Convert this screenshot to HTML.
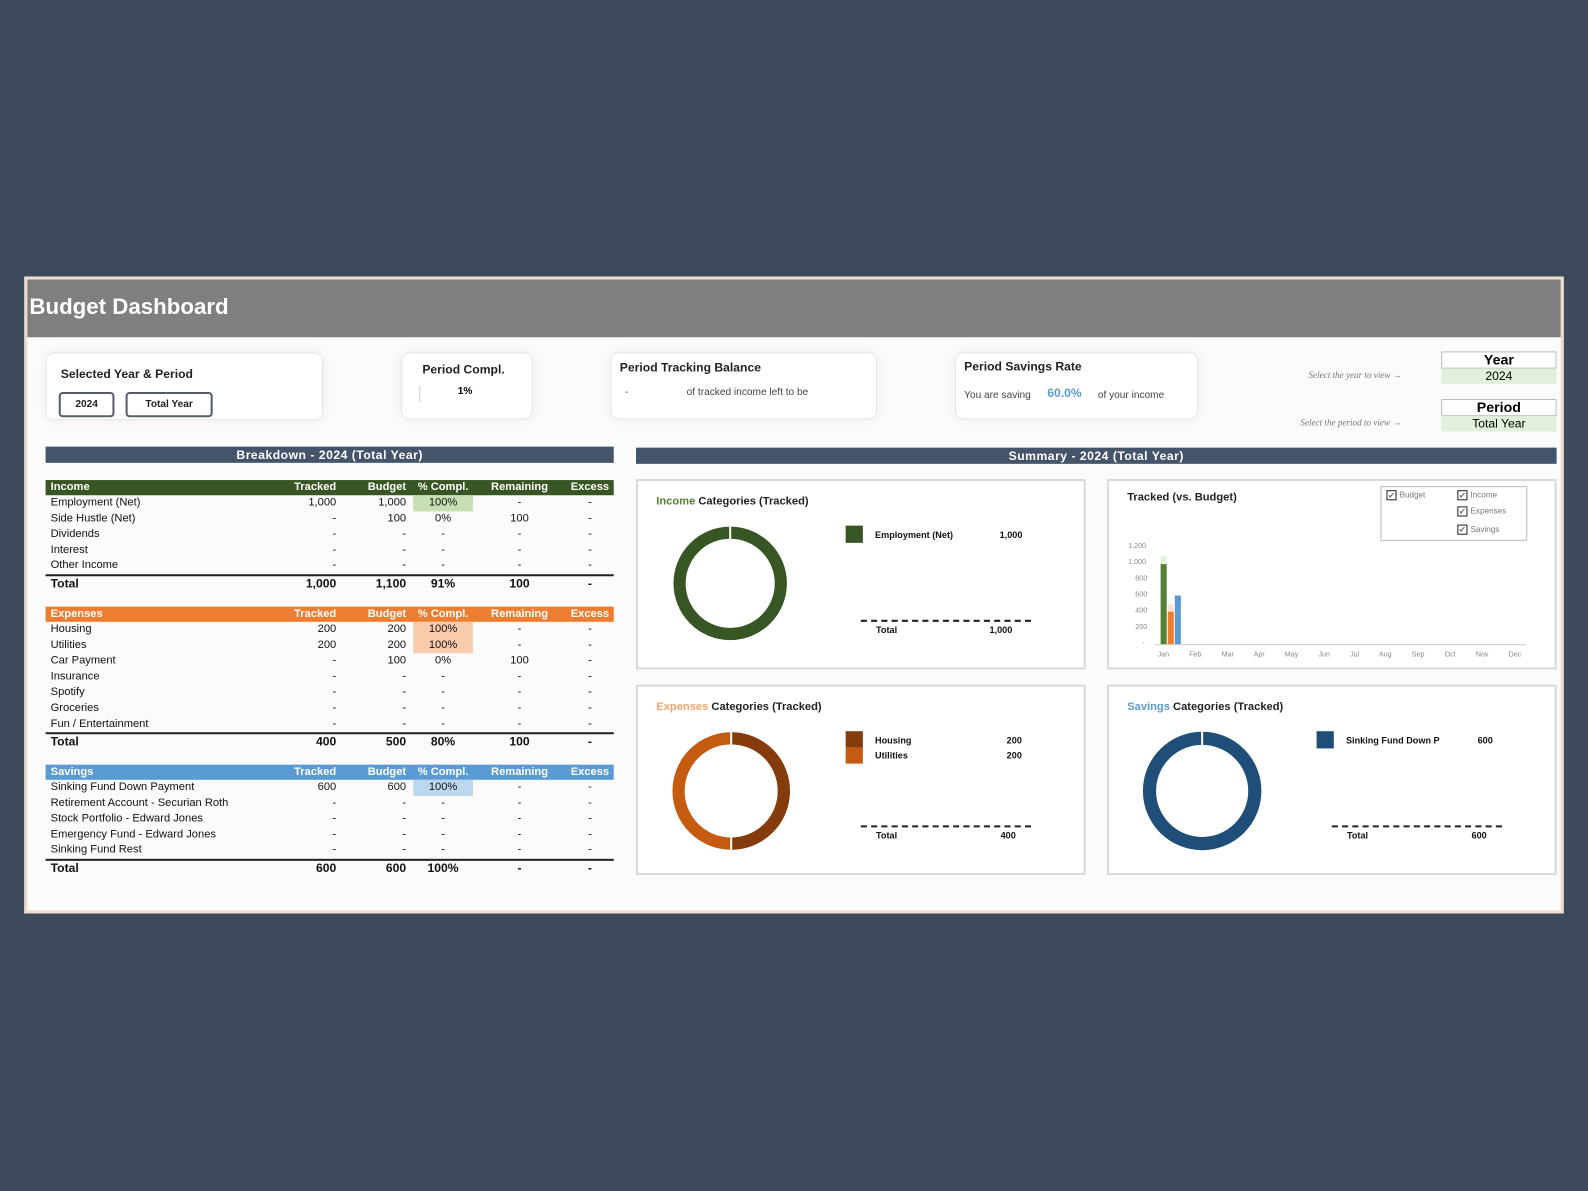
<!DOCTYPE html>
<html><head><meta charset="utf-8">
<style>
*{box-sizing:border-box;margin:0;padding:0}
body{width:1588px;height:1191px;background:#3d4a5c;font-family:"Liberation Sans",sans-serif;position:relative;overflow:hidden}
#wrap{position:absolute;left:0;top:0;width:1568px;height:1176px;transform:scale(1.01276);transform-origin:0 0}
.abs{position:absolute}
#panel{left:24px;top:273px;width:1520px;height:629px;background:#fbfbfb;border:3px solid #f1dccb}
#hdr{left:27px;top:276px;width:1514px;height:57px;background:#7f7f7f;color:#fff;font-weight:bold;font-size:22px;padding:14px 0 0 2px}
.card{background:#fff;border:1px solid #e6e6e6;border-radius:8px;box-shadow:0 0 12px rgba(0,0,0,.06)}
.ct{font-size:12px;font-weight:bold;color:#222}
.btn{border:2px solid #555d68;border-radius:4px;font-size:10px;font-weight:bold;text-align:center;color:#222;background:#fff}
.bar{background:#44546a;color:#fff;font-weight:bold;font-size:12px;text-align:center;height:16px;line-height:16px;letter-spacing:.5px}
.tbl{left:45px;width:561px;font-size:11px;color:#111}
.r{display:flex;height:15.6px;line-height:15.6px;white-space:nowrap}
.r span:nth-child(1){width:220px;padding-left:5px}
.r span:nth-child(2){width:67px;text-align:right}
.r span:nth-child(3){width:69px;text-align:right}
.r span:nth-child(4){width:7px}
.r span:nth-child(5){width:59px;text-align:center}
.r span:nth-child(6){width:92px;text-align:center}
.r span:nth-child(7){width:47px;text-align:center}
.h{color:#fff;font-weight:bold;height:15px;line-height:15px}
.t{font-weight:bold;border-top:2px solid #222;font-size:12px}
.box{background:#fff;border:2px solid #d9d9d9}
.lg{font-size:9px;font-weight:bold;color:#111}
.ax{font-size:7px;color:#888}
.cb{display:inline-block;width:10px;height:10px;border:1px solid #222;font-size:9px;line-height:8px;text-align:center;vertical-align:middle;margin-right:3px}
</style></head><body><div id="wrap">
<div id="panel" class="abs"></div>
<div id="hdr" class="abs">Budget Dashboard</div>

<div class="abs card" style="left:45px;top:348px;width:274px;height:67px"></div>
<div class="abs ct" style="left:60px;top:362px">Selected Year &amp; Period</div>
<div class="abs btn" style="left:58px;top:387px;width:55px;height:25px;line-height:21px">2024</div>
<div class="abs btn" style="left:124px;top:387px;width:86px;height:25px;line-height:21px">Total Year</div>

<div class="abs card" style="left:396px;top:348px;width:130px;height:66px"></div>
<div class="abs ct" style="left:417px;top:358px">Period Compl.</div>
<div class="abs" style="left:414px;top:381px;width:1px;height:16px;background:#ccc"></div>
<div class="abs" style="left:452px;top:381px;font-size:10px;font-weight:bold">1%</div>

<div class="abs card" style="left:603px;top:348px;width:263px;height:66px"></div>
<div class="abs ct" style="left:612px;top:356px">Period Tracking Balance</div>
<div class="abs" style="left:617px;top:382px;font-size:10px;color:#444">-</div>
<div class="abs" style="left:678px;top:382px;font-size:10px;color:#444">of tracked income left to be</div>

<div class="abs card" style="left:943px;top:348px;width:240px;height:66px"></div>
<div class="abs ct" style="left:952px;top:355px">Period Savings Rate</div>
<div class="abs" style="left:952px;top:385px;font-size:10px;color:#444">You are saving</div>
<div class="abs" style="left:1034px;top:381px;font-size:12px;font-weight:bold;color:#5b9bd5">60.0%</div>
<div class="abs" style="left:1084px;top:385px;font-size:10px;color:#444">of your income</div>

<div class="abs" style="left:1292px;top:365px;font-size:9px;font-style:italic;color:#777;font-family:'Liberation Serif',serif">Select the year to view →</div>
<div class="abs" style="left:1284px;top:412px;font-size:9px;font-style:italic;color:#777;font-family:'Liberation Serif',serif">Select the period to view →</div>
<div class="abs" style="left:1423px;top:347px;width:114px;height:17px;border:1px solid #bbb;background:#fff;text-align:center;font-weight:bold;font-size:14px;line-height:15px">Year</div>
<div class="abs" style="left:1423px;top:364px;width:114px;height:15px;background:#e2efda;text-align:center;font-size:12px;line-height:14px">2024</div>
<div class="abs" style="left:1423px;top:394px;width:114px;height:17px;border:1px solid #bbb;background:#fff;text-align:center;font-weight:bold;font-size:14px;line-height:15px">Period</div>
<div class="abs" style="left:1423px;top:411px;width:114px;height:15px;background:#e2efda;text-align:center;font-size:12px;line-height:14px">Total Year</div>

<div class="abs bar" style="left:45px;top:441px;width:561px">Breakdown - 2024 (Total Year)</div>
<div class="abs bar" style="left:628px;top:442px;width:909px">Summary - 2024 (Total Year)</div>

<div class="abs tbl" style="top:474px">
<div class="r h" style="background:#375623"><span>Income</span><span>Tracked</span><span>Budget</span><span></span><span>% Compl.</span><span>Remaining</span><span>Excess</span></div>
<div class="r"><span>Employment (Net)</span><span>1,000</span><span>1,000</span><span></span><span style="background:#c6e0b4">100%</span><span>-</span><span>-</span></div>
<div class="r"><span>Side Hustle (Net)</span><span>-</span><span>100</span><span></span><span>0%</span><span>100</span><span>-</span></div>
<div class="r"><span>Dividends</span><span>-</span><span>-</span><span></span><span>-</span><span>-</span><span>-</span></div>
<div class="r"><span>Interest</span><span>-</span><span>-</span><span></span><span>-</span><span>-</span><span>-</span></div>
<div class="r"><span>Other Income</span><span>-</span><span>-</span><span></span><span>-</span><span>-</span><span>-</span></div>
<div class="r t"><span>Total</span><span>1,000</span><span>1,100</span><span></span><span>91%</span><span>100</span><span>-</span></div>
</div>

<div class="abs tbl" style="top:599px">
<div class="r h" style="background:#ed7d31"><span>Expenses</span><span>Tracked</span><span>Budget</span><span></span><span>% Compl.</span><span>Remaining</span><span>Excess</span></div>
<div class="r"><span>Housing</span><span>200</span><span>200</span><span></span><span style="background:#f8cbad">100%</span><span>-</span><span>-</span></div>
<div class="r"><span>Utilities</span><span>200</span><span>200</span><span></span><span style="background:#f8cbad">100%</span><span>-</span><span>-</span></div>
<div class="r"><span>Car Payment</span><span>-</span><span>100</span><span></span><span>0%</span><span>100</span><span>-</span></div>
<div class="r"><span>Insurance</span><span>-</span><span>-</span><span></span><span>-</span><span>-</span><span>-</span></div>
<div class="r"><span>Spotify</span><span>-</span><span>-</span><span></span><span>-</span><span>-</span><span>-</span></div>
<div class="r"><span>Groceries</span><span>-</span><span>-</span><span></span><span>-</span><span>-</span><span>-</span></div>
<div class="r"><span>Fun / Entertainment</span><span>-</span><span>-</span><span></span><span>-</span><span>-</span><span>-</span></div>
<div class="r t"><span>Total</span><span>400</span><span>500</span><span></span><span>80%</span><span>100</span><span>-</span></div>
</div>

<div class="abs tbl" style="top:755px">
<div class="r h" style="background:#5b9bd5"><span>Savings</span><span>Tracked</span><span>Budget</span><span></span><span>% Compl.</span><span>Remaining</span><span>Excess</span></div>
<div class="r"><span>Sinking Fund Down Payment</span><span>600</span><span>600</span><span></span><span style="background:#bdd7ee">100%</span><span>-</span><span>-</span></div>
<div class="r"><span>Retirement Account - Securian Roth</span><span>-</span><span>-</span><span></span><span>-</span><span>-</span><span>-</span></div>
<div class="r"><span>Stock Portfolio - Edward Jones</span><span>-</span><span>-</span><span></span><span>-</span><span>-</span><span>-</span></div>
<div class="r"><span>Emergency Fund - Edward Jones</span><span>-</span><span>-</span><span></span><span>-</span><span>-</span><span>-</span></div>
<div class="r"><span>Sinking Fund Rest</span><span>-</span><span>-</span><span></span><span>-</span><span>-</span><span>-</span></div>
<div class="r t"><span>Total</span><span>600</span><span>600</span><span></span><span>100%</span><span>-</span><span>-</span></div>
</div>

<div class="abs box" style="left:628px;top:473px;width:444px;height:188px"></div>
<div class="abs ct" style="left:648px;top:489px;font-size:11px"><span style="color:#548235">Income</span> Categories (Tracked)</div>
<svg class="abs" style="left:660px;top:515px" width="122" height="122"><circle cx="61" cy="61" r="50" fill="none" stroke="#375623" stroke-width="12"/><line x1="61" y1="3" x2="61" y2="18" stroke="#fff" stroke-width="2"/></svg>
<div class="abs" style="left:835px;top:519px;width:17px;height:17px;background:#375623"></div>
<div class="abs lg" style="left:864px;top:523px">Employment (Net)</div>
<div class="abs lg" style="left:987px;top:523px">1,000</div>
<div class="abs" style="left:850px;top:612px;width:168px;border-top:2px dashed #222"></div>
<div class="abs lg" style="left:865px;top:617px">Total</div>
<div class="abs lg" style="left:977px;top:617px">1,000</div>

<div class="abs box" style="left:628px;top:676px;width:444px;height:188px"></div>
<div class="abs ct" style="left:648px;top:692px;font-size:11px"><span style="color:#f4a46a">Expenses</span> Categories (Tracked)</div>
<svg class="abs" style="left:660px;top:719px" width="124" height="124"><circle cx="62" cy="62" r="52" fill="none" stroke="#c55a11" stroke-width="12"/><path d="M62 10 A52 52 0 0 1 62 114" fill="none" stroke="#843c0c" stroke-width="12"/><line x1="62" y1="3" x2="62" y2="18" stroke="#fff" stroke-width="2"/><line x1="62" y1="106" x2="62" y2="121" stroke="#fff" stroke-width="2"/></svg>
<div class="abs" style="left:835px;top:722px;width:17px;height:16px;background:#843c0c"></div>
<div class="abs" style="left:835px;top:738px;width:17px;height:16px;background:#c55a11"></div>
<div class="abs lg" style="left:864px;top:726px">Housing</div>
<div class="abs lg" style="left:864px;top:741px">Utilities</div>
<div class="abs lg" style="left:994px;top:726px">200</div>
<div class="abs lg" style="left:994px;top:741px">200</div>
<div class="abs" style="left:850px;top:815px;width:168px;border-top:2px dashed #222"></div>
<div class="abs lg" style="left:865px;top:820px">Total</div>
<div class="abs lg" style="left:988px;top:820px">400</div>

<div class="abs box" style="left:1093px;top:473px;width:444px;height:188px"></div>
<div class="abs ct" style="left:1113px;top:485px;font-size:11px">Tracked (vs. Budget)</div>
<div class="abs" style="left:1363px;top:480px;width:145px;height:54px;border:1px solid #bbb;background:#fff"></div>
<div class="abs ax" style="left:1369px;top:484px;color:#777;font-size:8px"><span class="cb">✔</span>Budget</div>
<div class="abs ax" style="left:1439px;top:484px;color:#777;font-size:8px"><span class="cb">✔</span>Income</div>
<div class="abs ax" style="left:1439px;top:500px;color:#777;font-size:8px"><span class="cb">✔</span>Expenses</div>
<div class="abs ax" style="left:1439px;top:518px;color:#777;font-size:8px"><span class="cb">✔</span>Savings</div>
<div class="abs ax" style="left:1114px;top:536px">1,200</div>
<div class="abs ax" style="left:1114px;top:552px">1,000</div>
<div class="abs ax" style="left:1121px;top:568px">800</div>
<div class="abs ax" style="left:1121px;top:584px">600</div>
<div class="abs ax" style="left:1121px;top:600px">400</div>
<div class="abs ax" style="left:1121px;top:616px">200</div>
<div class="abs ax" style="left:1128px;top:632px">-</div>
<div class="abs" style="left:1140px;top:636px;width:367px;height:1px;background:#ccc"></div>
<div class="abs" style="left:1146px;top:549px;width:6px;height:8px;background:#e2efda"></div>
<div class="abs" style="left:1146px;top:557px;width:6px;height:79px;background:#548235"></div>
<div class="abs" style="left:1153px;top:596px;width:6px;height:8px;background:#fbe5d6"></div>
<div class="abs" style="left:1153px;top:604px;width:6px;height:32px;background:#ed7d31"></div>
<div class="abs" style="left:1160px;top:588px;width:6px;height:48px;background:#5b9bd5"></div>
<div class="abs ax" style="left:1143px;top:643px;word-spacing:18px;white-space:nowrap">Jan Feb Mar Apr May Jun Jul Aug Sep Oct Nov Dec</div>

<div class="abs box" style="left:1093px;top:676px;width:444px;height:188px"></div>
<div class="abs ct" style="left:1113px;top:692px;font-size:11px"><span style="color:#5b9bd5">Savings</span> Categories (Tracked)</div>
<svg class="abs" style="left:1125px;top:719px" width="124" height="124"><circle cx="62" cy="62" r="52" fill="none" stroke="#1f4e79" stroke-width="13"/><line x1="62" y1="3" x2="62" y2="18" stroke="#fff" stroke-width="2"/></svg>
<div class="abs" style="left:1300px;top:722px;width:17px;height:17px;background:#1f4e79"></div>
<div class="abs lg" style="left:1329px;top:726px">Sinking Fund Down P</div>
<div class="abs lg" style="left:1459px;top:726px">600</div>
<div class="abs" style="left:1315px;top:815px;width:168px;border-top:2px dashed #222"></div>
<div class="abs lg" style="left:1330px;top:820px">Total</div>
<div class="abs lg" style="left:1453px;top:820px">600</div>
</div></body></html>
